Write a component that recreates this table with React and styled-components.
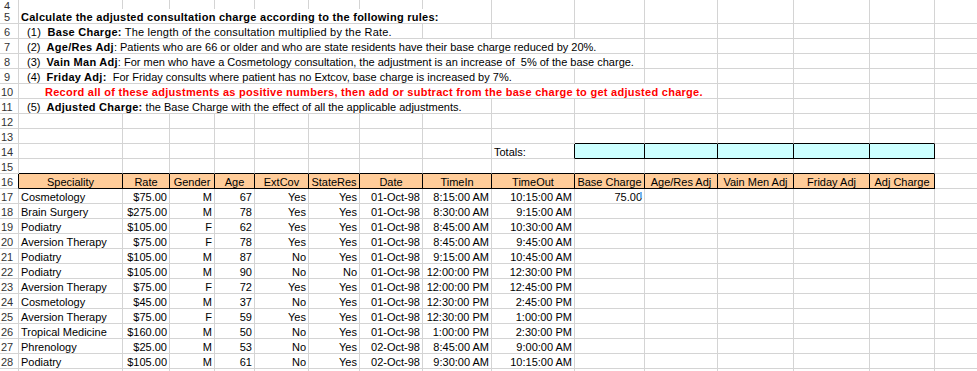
import React from 'react'
import styled, { createGlobalStyle } from 'styled-components'

// column widths incl. the 1px right gridline: row numbers, A..O
const COLS = [19, 104, 47, 45, 40, 54, 51, 63, 69, 83, 70, 73, 76, 76, 65, 80]
const GRID = '#d4d4d4'
const INK = '#000000'

const GlobalStyle = createGlobalStyle`
  html, body {
    margin: 0;
    padding: 0;
    background: #ffffff;
    overflow: hidden;
  }
`

const Sheet = styled.div`
  position: relative;
  width: 977px;
  height: 371px;
  overflow: hidden;
  background: #ffffff;
  font-family: "Liberation Sans", Arial, sans-serif;
  font-size: 11px;
  color: ${INK};
`

const Row = styled.div`
  display: grid;
  grid-template-columns: ${COLS.map((w) => w + 'px').join(' ')};
  height: ${(p) => p.$h || 15}px;
`

const Cell = styled.div`
  position: relative;
  box-sizing: border-box;
  display: flex;
  align-items: flex-end;
  justify-content: ${(p) =>
    p.$align === 'right' ? 'flex-end' : p.$align === 'center' ? 'center' : 'flex-start'};
  grid-column: span ${(p) => p.$span || 1};
  padding: 0 2px 0 ${(p) => (p.$indent != null ? p.$indent : 2)}px;
  border-right: 1px solid ${(p) => p.$right || GRID};
  border-bottom: 1px solid ${(p) => p.$bottom || GRID};
  background: ${(p) => p.$fill || '#ffffff'};
  color: ${(p) => p.$color || INK};
  font-weight: ${(p) => (p.$bold ? 700 : 400)};
  letter-spacing: ${(p) => (p.$bold ? '0.27px' : p.$track ? p.$track + 'px' : 'normal')};
  line-height: 12px;
  white-space: pre;
  overflow: visible;
`

const RowNum = styled(Cell)`
  justify-content: center;
  padding: 0 4px 0 0;
  color: #333333;
`

const B = styled.span`
  font-weight: 700;
  letter-spacing: 0.27px;
`

const Handle = styled.span`
  position: absolute;
  right: 2px;
  top: 3px;
  width: 2px;
  height: 6px;
  background: #6fb3f0;
`

const empty = (n, props = {}) => Array.from({ length: n }, () => ({ ...props }))

const textRow = (n, span, content, extra = {}) => ({
  n,
  cells: [{ content, span, indent: 8, ...extra }, ...empty(15 - span)],
})

const HEADERS = [
  'Speciality', 'Rate', 'Gender', 'Age', 'ExtCov', 'StateRes', 'Date', 'TimeIn',
  'TimeOut', 'Base Charge', 'Age/Res Adj', 'Vain Men Adj', 'Friday Adj', 'Adj Charge',
]

const DATA = [
  ['Cosmetology', '$75.00', 'M', '67', 'Yes', 'Yes', '01-Oct-98', '8:15:00 AM', '10:15:00 AM', '75.00'],
  ['Brain Surgery', '$275.00', 'M', '78', 'Yes', 'Yes', '01-Oct-98', '8:30:00 AM', '9:15:00 AM'],
  ['Podiatry', '$105.00', 'F', '62', 'Yes', 'Yes', '01-Oct-98', '8:45:00 AM', '10:30:00 AM'],
  ['Aversion Therapy', '$75.00', 'F', '78', 'Yes', 'Yes', '01-Oct-98', '8:45:00 AM', '9:45:00 AM'],
  ['Podiatry', '$105.00', 'M', '87', 'No', 'Yes', '01-Oct-98', '9:15:00 AM', '10:45:00 AM'],
  ['Podiatry', '$105.00', 'M', '90', 'No', 'No', '01-Oct-98', '12:00:00 PM', '12:30:00 PM'],
  ['Aversion Therapy', '$75.00', 'F', '72', 'Yes', 'Yes', '01-Oct-98', '12:00:00 PM', '12:45:00 PM'],
  ['Cosmetology', '$45.00', 'M', '37', 'No', 'Yes', '01-Oct-98', '12:30:00 PM', '2:45:00 PM'],
  ['Aversion Therapy', '$75.00', 'F', '59', 'Yes', 'Yes', '01-Oct-98', '12:30:00 PM', '1:00:00 PM'],
  ['Tropical Medicine', '$160.00', 'M', '50', 'No', 'Yes', '01-Oct-98', '1:00:00 PM', '2:30:00 PM'],
  ['Phrenology', '$25.00', 'M', '53', 'No', 'Yes', '02-Oct-98', '8:45:00 AM', '9:00:00 AM'],
  ['Podiatry', '$105.00', 'M', '61', 'No', 'Yes', '02-Oct-98', '9:30:00 AM', '10:15:00 AM'],
]

const ROWS = [
  { n: 4, h: 9, cells: empty(15) },
  {
    n: 5,
    cells: [
      { content: 'Calculate the adjusted consultation charge according to the following rules:', span: 8, bold: true },
      ...empty(7),
    ],
  },
  textRow(6, 7, <>(1)  <B>Base Charge:</B> The length of the consultation multiplied by the Rate.</>, { track: 0.2 }),
  textRow(7, 10, <>(2)  <B>Age/Res Adj</B>: Patients who are 66 or older and who are state residents have their base charge reduced by 20%.</>),
  textRow(8, 10, <>(3)  <B>Vain Man Adj</B>: For men who have a Cosmetology consultation, the adjustment is an increase of  5% of the base charge.</>),
  textRow(9, 9, <>(4)  <B>Friday Adj:</B>  For Friday consults where patient has no Extcov, base charge is increased by 7%.</>),
  textRow(
    10,
    11,
    'Record all of these adjustments as positive numbers, then add or subtract from the base charge to get adjusted charge.',
    { indent: 26, bold: true, color: '#ff0000' }
  ),
  textRow(11, 8, <>(5)  <B>Adjusted Charge:</B> the Base Charge with the effect of all the applicable adjustments.</>),
  { n: 12, cells: empty(15) },
  { n: 13, cells: [...empty(9), ...empty(5, { bottom: INK }), {}] },
  {
    n: 14,
    cells: [
      ...empty(8),
      { content: 'Totals:', right: INK },
      ...empty(5, { right: INK, bottom: INK, fill: '#ccffff' }),
      {},
    ],
  },
  { n: 15, cells: [...empty(14, { bottom: INK }), {}] },
  {
    n: 16,
    numRight: INK,
    cells: [
      ...HEADERS.map((h) => ({ content: h, align: 'center', right: INK, bottom: INK, fill: '#ffcc99' })),
      {},
    ],
  },
  ...DATA.map((d, i) => ({
    n: 17 + i,
    cells: [
      { content: d[0] },
      ...d.slice(1).map((v, j) => ({
        content: v,
        align: 'right',
        handle: i === 0 && j === 8,
      })),
      ...empty(15 - d.length),
    ],
  })),
  // last row only peeks in under the bottom edge: gridlines, no number
  { n: 29, label: '', cells: empty(15) },
]

export default function App() {
  return (
    <>
      <GlobalStyle />
      <Sheet>
        {ROWS.map((r) => (
          <Row key={r.n} $h={r.h}>
            <RowNum $right={r.numRight}>{r.label != null ? r.label : r.n}</RowNum>
            {r.cells.map((c, i) => (
              <Cell
                key={i}
                $span={c.span}
                $align={c.align}
                $bold={c.bold}
                $color={c.color}
                $fill={c.fill}
                $right={c.right}
                $bottom={c.bottom}
                $indent={c.indent}
                $track={c.track}
              >
                {c.content}
                {c.handle && <Handle />}
              </Cell>
            ))}
          </Row>
        ))}
      </Sheet>
    </>
  )
}
